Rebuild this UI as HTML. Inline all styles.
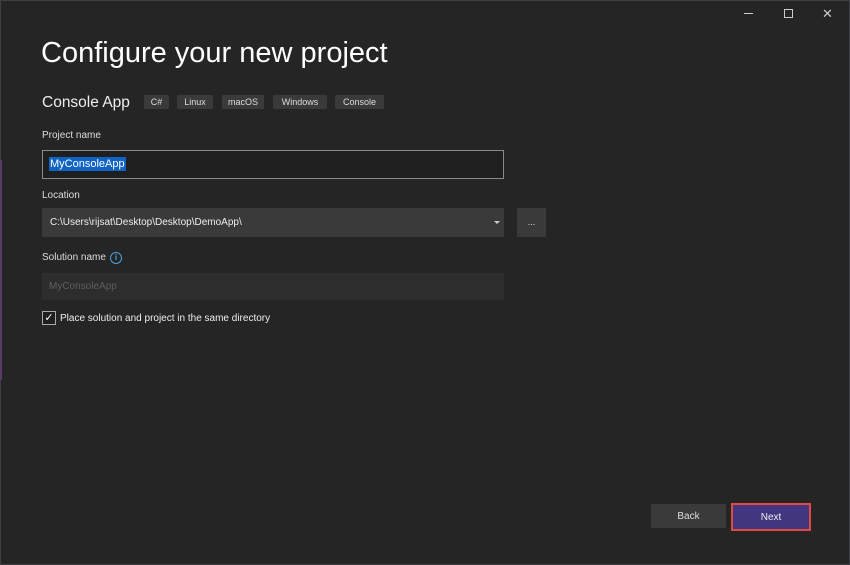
<!DOCTYPE html>
<html><head><style>
*{margin:0;padding:0;box-sizing:border-box}
body{width:850px;height:565px;background:#252526;font-family:"Liberation Sans",sans-serif;color:#f1f1f1;position:relative;overflow:hidden}
.frame{position:absolute;inset:0;border:1px solid #3f3f46;background:#252526}
.abs{position:absolute}
.tag{position:absolute;top:95px;height:14px;background:#3a3a3a;color:#ddd;font-size:9px;line-height:14px;text-align:center;border-radius:1px}
.lbl{position:absolute;left:42px;font-size:10px;color:#ddd}
</style></head><body>
<div class="frame"></div>
<div class="abs" style="left:0;top:160px;width:2px;height:220px;background:#5a3a6a"></div>
<div class="abs" style="left:744px;top:13px;width:9px;height:1px;background:#ccc"></div>
<div class="abs" style="left:784px;top:9px;width:9px;height:9px;border:1px solid #ccc"></div>
<div class="abs" style="left:822px;top:6px;color:#ccc;font-size:13px">✕</div>
<div class="abs" style="left:41px;top:37px;font-size:29px;color:#fff">Configure your new project</div>
<div class="abs" style="left:42px;top:94px;font-size:15.5px;color:#eee">Console App</div>
<div class="tag" style="left:144px;width:25px">C#</div>
<div class="tag" style="left:177px;width:36px">Linux</div>
<div class="tag" style="left:222px;width:42px">macOS</div>
<div class="tag" style="left:273px;width:54px">Windows</div>
<div class="tag" style="left:335px;width:49px">Console</div>
<div class="lbl" style="top:130px">Project name</div>
<div class="abs" style="left:42px;top:150px;width:462px;height:29px;border:1px solid #8a8a8a;background:#1f1f1f"></div>
<div class="abs" style="left:49px;top:157px;height:14px;background:#0e63c4;color:#fff;font-size:11px;line-height:14px;padding:0 1px">MyConsoleApp</div>
<div class="lbl" style="top:190px">Location</div>
<div class="abs" style="left:42px;top:208px;width:462px;height:29px;background:#3a3a3a;color:#eee;font-size:10px;line-height:29px;padding-left:8px">C:\Users\rijsat\Desktop\Desktop\DemoApp\</div>
<div class="abs" style="left:494px;top:221px;border:3px solid transparent;border-top:3px solid #ccc"></div>
<div class="abs" style="left:517px;top:208px;width:29px;height:29px;background:#3a3a3a;color:#ddd;font-size:9px;text-align:center;line-height:29px">...</div>
<div class="lbl" style="top:252px">Solution name</div>
<div class="abs" style="left:110px;top:252px;width:12px;height:12px;border:1px solid #4aa3df;border-radius:50%;color:#4aa3df;font-size:8px;text-align:center;line-height:10px;font-weight:bold">i</div>
<div class="abs" style="left:42px;top:273px;width:462px;height:27px;background:#2d2d2d;color:#5e5e5e;font-size:10px;line-height:27px;padding-left:7px">MyConsoleApp</div>
<div class="abs" style="left:42px;top:311px;width:14px;height:14px;border:1px solid #aaa;background:#1f1f1f;color:#fff;font-size:11px;text-align:center;line-height:12px">✓</div>
<div class="abs" style="left:60px;top:313px;font-size:10px;color:#eee">Place solution and project in the same directory</div>
<div class="abs" style="left:651px;top:504px;width:75px;height:24px;background:#3a3a3a;color:#ddd;font-size:10px;text-align:center;line-height:25px">Back</div>
<div class="abs" style="left:731px;top:503px;width:80px;height:28px;border:2px solid #e04a40;background:#433680;color:#eee;font-size:10px;text-align:center;line-height:25px">Next</div>
</body></html>
